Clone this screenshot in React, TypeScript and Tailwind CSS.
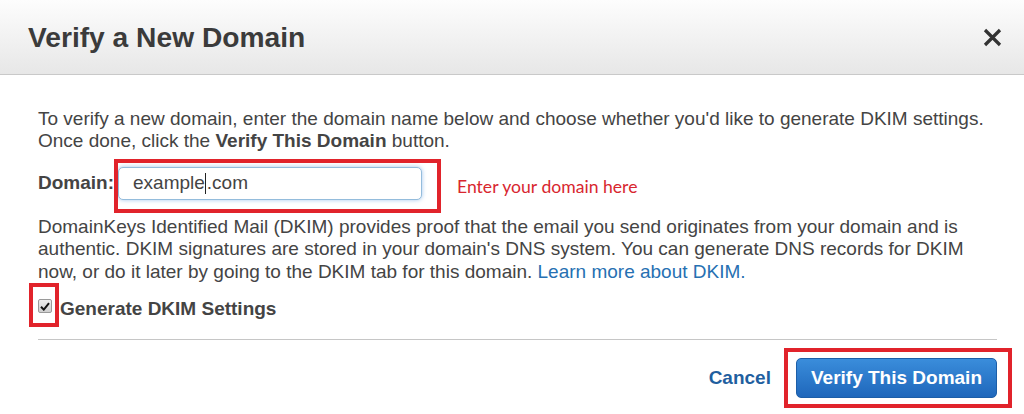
import React from 'react';

const FONT = { fontFamily: '"Liberation Sans", Arial, Helvetica, sans-serif' };

function Annotation({ className }: { className: string }) {
  return <span className={`pointer-events-none absolute border-[4px] border-[#e1232b] ${className}`} />;
}

function CloseIcon() {
  return (
    <svg width="19" height="19" viewBox="0 0 19 19" aria-hidden>
      <path d="M2 2 L17 17 M17 2 L2 17" stroke="#333" strokeWidth="3.2" strokeLinecap="butt" />
    </svg>
  );
}

function CheckBox() {
  return (
    <span className="relative mt-[1.5px] inline-flex h-[14px] w-[14px] shrink-0 items-center justify-center rounded-[2px] border border-[#9a9a9a] bg-gradient-to-b from-[#ececec] to-[#cfcfcf]">
      <svg width="10" height="9" viewBox="0 0 10 9" aria-hidden>
        <path d="M1 4.8 L3.8 7.6 L9 1.2" fill="none" stroke="#111" strokeWidth="2" />
      </svg>
      <Annotation className="left-[-10px] right-[-8px] top-[-17px] bottom-[-15px]" />
    </span>
  );
}

export default function App() {
  return (
    <div className="h-[414px] w-[1024px] overflow-hidden bg-white text-[#444]" style={FONT}>
      <div className="flex h-[75px] items-center justify-between border-b border-[#c9c9c9] bg-gradient-to-b from-[#fdfdfd] to-[#e7e7e7] pl-[28px] pr-[22px]">
        <h1 className="text-[28.2px] font-bold leading-none text-[#3b3b3b]">Verify a New Domain</h1>
        <CloseIcon />
      </div>

      <div className="pl-[38px] pr-[27px] pt-[32.5px] text-[19px] leading-[22.5px]">
        <p>
          To verify a new domain, enter the domain name below and choose whether you'd like to generate DKIM settings.
          <br />
          Once done, click the <b>Verify This Domain</b> button.
        </p>

        <div className="mt-[14.5px] flex items-center">
          <span className="font-bold">Domain:</span>
          <div className="relative ml-[4px] h-[33px] w-[304px]">
            <div className="flex h-full w-full items-center rounded-[5px] border border-[#94bcdc] bg-white pl-[14px] shadow-[0_0_4px_rgba(82,150,220,0.55)]">
              <span>example</span>
              <span className="mx-[0.5px] inline-block h-[21px] w-px bg-[#222]" />
              <span>.com</span>
            </div>
            <Annotation className="left-[-4px] right-[-19px] top-[-8px] bottom-[-13px]" />
          </div>
          <span
            className="ml-[35px] mt-[7px] text-[17.6px] text-[#d8262f]"
            style={{ fontFamily: 'Lato, "Open Sans", sans-serif' }}
          >
            Enter your domain here
          </span>
        </div>

        <p className="mt-[15.5px]">
          DomainKeys Identified Mail (DKIM) provides proof that the email you send originates from your domain and is
          <br />
          authentic. DKIM signatures are stored in your domain's DNS system. You can generate DNS records for DKIM
          <br />
          now, or do it later by going to the DKIM tab for this domain.{' '}
          <a className="text-[#2670b2]">Learn more about DKIM.</a>
        </p>

        <label className="mt-[14.5px] flex items-start gap-[8px]">
          <CheckBox />
          <span className="font-bold">Generate DKIM Settings</span>
        </label>

        <div className="mt-[19px] h-px bg-[#c6c6c6]" />

        <div className="mt-[18px] flex items-center justify-end">
          <button className="text-[19px] font-bold text-[#1f5f9f]">Cancel</button>
          <div className="relative ml-[25px]">
            <button className="h-[40px] rounded-[5px] border border-[#1c5ea8] bg-gradient-to-b from-[#3a8ddb] to-[#1f67bb] px-[14px] font-bold text-white">
              Verify This Domain
            </button>
            <Annotation className="left-[-12px] right-[-15px] top-[-10px] bottom-[-10px]" />
          </div>
        </div>
      </div>
    </div>
  );
}
